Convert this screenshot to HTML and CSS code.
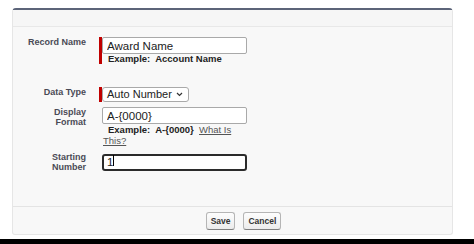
FILE: index.html
```html
<!DOCTYPE html>
<html lang="en">
<head>
<meta charset="utf-8">
<title>New Custom Field</title>
<link rel="stylesheet" href="styles.css">
</head>
<body>
<div class="panel">
  <div class="panel-head"></div>
  <div class="panel-body">
    <div class="row row-name">
      <div class="label">Record Name</div>
      <div class="field required">
        <input class="text" type="text" value="Award Name">
        <div class="help"><b>Example:&nbsp; Account Name</b></div>
      </div>
    </div>
    <div class="row row-type">
      <div class="label">Data Type</div>
      <div class="field required">
        <div class="select">
          <span>Auto Number</span>
          <svg class="chev" width="7" height="5" viewBox="0 0 7 5"><path d="M1 1l2.5 2.5L6 1" fill="none" stroke="#333" stroke-width="1.2"/></svg>
        </div>
      </div>
    </div>
    <div class="row row-format">
      <div class="label">Display Format</div>
      <div class="field">
        <input class="text" type="text" value="A-{0000}">
        <div class="help"><b>Example:&nbsp; A-{0000}</b>&nbsp; <a href="#">What Is This?</a></div>
      </div>
    </div>
    <div class="row row-start">
      <div class="label">Starting Number</div>
      <div class="field">
        <div class="focus-wrap">
          <input class="text focused" type="text" value="1">
          <span class="caret"></span>
        </div>
      </div>
    </div>
  </div>
  <div class="panel-foot">
    <button class="btn" type="button">Save</button>
    <button class="btn" type="button">Cancel</button>
  </div>
</div>
<div class="taskbar"></div>
</body>
</html>
```

FILE: styles.css
```css
html, body {
  margin: 0;
  padding: 0;
  background: #ffffff;
}
body {
  width: 474px;
  height: 244px;
  overflow: hidden;
  font-family: "Liberation Sans", Arial, sans-serif;
  color: #000;
}
.panel {
  margin: 8px 0 0 12px;
  width: 439px;
  background: #f8f8f8;
  border: 1px solid #e6e6e6;
  border-top: 2px solid #5c6479;
  border-radius: 4px 4px 3px 3px;
}
.panel-head {
  height: 16px;
  background: #f6f6f6;
  border-bottom: 1px solid #e8e8e8;
}
.panel-body {
  padding: 10px 0 34px 0;
}
.row {
  display: grid;
  grid-template-columns: 60px 146px;
  column-gap: 13px;
  padding-left: 13px;
}
.row-name { margin-bottom: 23px; }
.row-type { margin-bottom: 5px; }
.row-format { margin-bottom: 6px; }
.label {
  font-size: 9px;
  line-height: 10px;
  font-weight: bold;
  color: #4a4a56;
  text-align: right;
}
.field {
  border-left: 3px solid transparent;
  display: flex;
  flex-direction: column;
  align-items: flex-start;
}
.field.required {
  border-left-color: #c00000;
}
.text {
  box-sizing: border-box;
  width: 145px;
  height: 17px;
  margin: 0;
  padding: 1px 4px;
  border: 1px solid #a9a9a9;
  border-radius: 2px;
  background: #fff;
  font-family: "Liberation Sans", Arial, sans-serif;
  font-size: 11.5px;
  line-height: 13px;
  color: #222;
  outline: none;
}
.focus-wrap {
  position: relative;
}
.text.focused {
  border: 2px solid #2b2b2b;
  border-radius: 3px;
  padding: 0 3px;
}
.caret {
  position: absolute;
  left: 11px;
  top: 3px;
  width: 1px;
  height: 11px;
  background: #000;
}
.help {
  font-size: 9.5px;
  line-height: 11px;
  color: #333;
  padding-left: 1px;
  text-indent: 5px;
  width: 145px;
}
.row-name .help {
  line-height: 10px;
}
.help b {
  font-weight: bold;
  color: #222;
}
.help a {
  color: #555;
  text-decoration: underline;
}
.select {
  box-sizing: border-box;
  height: 15px;
  width: 87px;
  display: flex;
  align-items: center;
  justify-content: space-between;
  padding: 0 5px 0 4px;
  border: 1px solid #a9a9a9;
  border-radius: 3px;
  background: #fff;
  font-size: 11px;
  line-height: 13px;
  color: #222;
}
.chev {
  display: block;
}
.panel-foot {
  border-top: 1px solid #e4e4e4;
  display: flex;
  justify-content: center;
  gap: 8px;
  padding: 5px 0 4px 22px;
}
.btn {
  box-sizing: border-box;
  height: 18px;
  margin: 0;
  padding: 0 4px;
  border: 1px solid #b5b5b5;
  border-bottom-color: #7f7f7f;
  border-radius: 3px;
  background: linear-gradient(#fdfdfd, #ececec);
  font-family: "Liberation Sans", Arial, sans-serif;
  font-size: 8.5px;
  font-weight: bold;
  color: #333;
}
.taskbar {
  position: fixed;
  left: 0;
  right: 0;
  bottom: 0;
  height: 5px;
  background: #000;
}
```
